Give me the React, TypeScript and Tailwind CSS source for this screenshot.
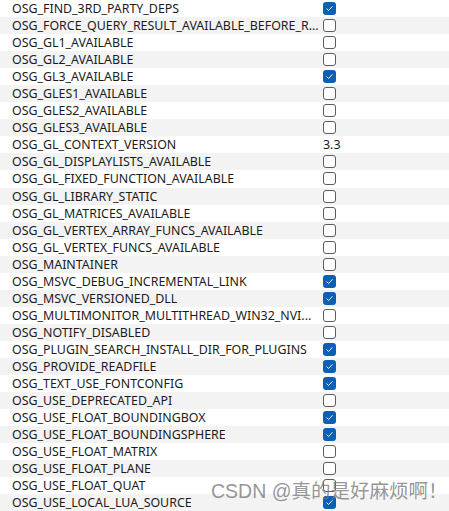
const rows: { name: string; value: boolean | string }[] = [
  { name: 'OSG_FIND_3RD_PARTY_DEPS', value: true },
  { name: 'OSG_FORCE_QUERY_RESULT_AVAILABLE_BEFORE_R...', value: false },
  { name: 'OSG_GL1_AVAILABLE', value: false },
  { name: 'OSG_GL2_AVAILABLE', value: false },
  { name: 'OSG_GL3_AVAILABLE', value: true },
  { name: 'OSG_GLES1_AVAILABLE', value: false },
  { name: 'OSG_GLES2_AVAILABLE', value: false },
  { name: 'OSG_GLES3_AVAILABLE', value: false },
  { name: 'OSG_GL_CONTEXT_VERSION', value: '3.3' },
  { name: 'OSG_GL_DISPLAYLISTS_AVAILABLE', value: false },
  { name: 'OSG_GL_FIXED_FUNCTION_AVAILABLE', value: false },
  { name: 'OSG_GL_LIBRARY_STATIC', value: false },
  { name: 'OSG_GL_MATRICES_AVAILABLE', value: false },
  { name: 'OSG_GL_VERTEX_ARRAY_FUNCS_AVAILABLE', value: false },
  { name: 'OSG_GL_VERTEX_FUNCS_AVAILABLE', value: false },
  { name: 'OSG_MAINTAINER', value: false },
  { name: 'OSG_MSVC_DEBUG_INCREMENTAL_LINK', value: true },
  { name: 'OSG_MSVC_VERSIONED_DLL', value: true },
  { name: 'OSG_MULTIMONITOR_MULTITHREAD_WIN32_NVI...', value: false },
  { name: 'OSG_NOTIFY_DISABLED', value: false },
  { name: 'OSG_PLUGIN_SEARCH_INSTALL_DIR_FOR_PLUGINS', value: true },
  { name: 'OSG_PROVIDE_READFILE', value: true },
  { name: 'OSG_TEXT_USE_FONTCONFIG', value: true },
  { name: 'OSG_USE_DEPRECATED_API', value: false },
  { name: 'OSG_USE_FLOAT_BOUNDINGBOX', value: true },
  { name: 'OSG_USE_FLOAT_BOUNDINGSPHERE', value: true },
  { name: 'OSG_USE_FLOAT_MATRIX', value: false },
  { name: 'OSG_USE_FLOAT_PLANE', value: false },
  { name: 'OSG_USE_FLOAT_QUAT', value: false },
  { name: 'OSG_USE_LOCAL_LUA_SOURCE', value: true },
];

function CheckBox({ checked }: { checked: boolean }) {
  if (checked) {
    return (
      <span className="flex h-[13px] w-[13px] items-center justify-center rounded-[3px] bg-[#0b5fb5]">
        <svg width="9" height="9" viewBox="0 0 9 9" fill="none">
          <path d="M1.8 4.8 L3.6 6.5 L7.2 2.6" stroke="white" strokeWidth="0.9" strokeLinecap="round" strokeLinejoin="round" />
        </svg>
      </span>
    );
  }
  return <span className="block h-[13px] w-[13px] rounded-[3px] border border-[#5c5c5c] bg-white" />;
}

export default function App() {
  return (
    <div className="relative h-[511px] w-[449px] overflow-hidden bg-white text-[#1b1b1b]" style={{ fontFamily: '"Noto Sans", "Open Sans", sans-serif' }}>
      {rows.map((row, i) => (
        <div key={row.name} className={`flex h-[17.05px] items-center ${i % 2 === 1 ? 'bg-[#f3f3f3]' : 'bg-white'}`}>
          <div className="w-[310px] shrink-0 whitespace-nowrap pl-[12px] text-[12.4px] leading-[17px]">{row.name}</div>
          <div className="flex items-center pl-[13px]">
            {typeof row.value === 'string' ? (
              <span className="text-[12.4px] leading-[17px]">{row.value}</span>
            ) : (
              <CheckBox checked={row.value} />
            )}
          </div>
        </div>
      ))}
      <div
        className="absolute left-[211px] top-[480px] whitespace-nowrap text-[19.5px] leading-[22px] text-[#7a7a7a]/80"
        style={{ fontFamily: '"Liberation Sans", "Noto Sans CJK SC", sans-serif' }}
      >
        CSDN @真的是好麻烦啊！
      </div>
    </div>
  );
}
